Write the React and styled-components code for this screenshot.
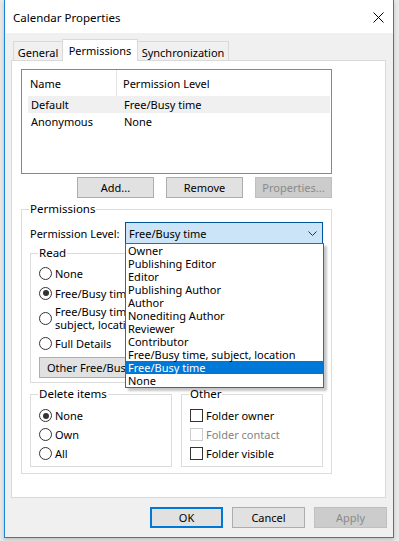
import React from "react"
import styled, { createGlobalStyle } from "styled-components"

const Global = createGlobalStyle`
  html, body { margin: 0; padding: 0; }
  body {
    background: #e9e9e9;
    font-family: "Noto Sans", "Segoe UI", sans-serif;
    font-size: 11px;
    color: #000;
  }
  * { box-sizing: border-box; }
`

const Desktop = styled.div`
  width: 399px;
  height: 541px;
  overflow: hidden;
  padding-left: 4px;
`

const Window = styled.div`
  width: 390px;
  height: 538px;
  background: #f0f0f0;
  border: 1px solid #1883d7;
  border-top: none;
  box-shadow: 0 2px 4px rgba(0,0,0,0.18);
  display: flex;
  flex-direction: column;
`

const TitleBar = styled.div`
  height: 33px;
  background: #fff;
  display: flex;
  align-items: center;
  justify-content: space-between;
  padding: 2px 9px 0 8px;
  flex-shrink: 0;
  font-size: 11.5px;
`

const Body = styled.div`
  padding: 6px 0 0 6px;
  display: flex;
  flex-direction: column;
`

const TabStrip = styled.div`
  display: flex;
  align-items: flex-end;
  height: 22px;
  margin-bottom: -1px;
  padding-left: 3px;
  position: relative;
  z-index: 1;
`

const Tab = styled.div`
  width: ${p => p.$w};
  height: ${p => (p.$active ? "22px" : "19px")};
  margin-bottom: ${p => (p.$active ? "0" : "1px")};
  margin-left: -1px;
  border: 1px solid #d9d9d9;
  border-bottom: none;
  background: ${p => (p.$active ? "#fff" : "#f0f0f0")};
  display: flex;
  align-items: center;
  justify-content: center;
  padding-top: ${p => (p.$active ? "0" : "2px")};
  white-space: nowrap;
`

const Panel = styled.div`
  width: 375px;
  height: 438px;
  background: #fff;
  border: 1px solid #d9d9d9;
  padding: 8px 0 0 9px;
`

const ListView = styled.div`
  width: 311px;
  height: 105px;
  border: 1px solid #828790;
  padding: 0 1px;
`

const HeaderRow = styled.div`
  display: flex;
  height: 26px;
`

const HeaderCell = styled.div`
  width: ${p => p.$w || "auto"};
  padding-left: ${p => p.$pl || "6px"};
  display: flex;
  align-items: center;
  border-right: ${p => (p.$sep ? "1px solid #e5e5e5" : "none")};
`

const Row = styled.div`
  display: flex;
  height: 17px;
  align-items: center;
  margin-left: 5px;
  background: ${p => (p.$selected ? "#f0f0f0" : "transparent")};
`

const Cell = styled.div`
  width: ${p => p.$w || "auto"};
  padding-left: ${p => p.$pl || "3px"};
`

const ButtonRow = styled.div`
  width: 311px;
  display: flex;
  justify-content: flex-end;
  gap: 12px;
  margin-top: 3px;
`

const Button = styled.button`
  width: ${p => p.$w || "77px"};
  height: 21px;
  padding: 0;
  font: inherit;
  color: #000;
  background: #e1e1e1;
  border: 1px solid #adadad;
  white-space: nowrap;
  overflow: hidden;
  text-align: ${p => (p.$left ? "left" : "center")};
  padding-left: ${p => (p.$left ? "7px" : "0")};
  margin-top: ${p => p.$mt || "0"};
  &:disabled {
    background: #cccccc;
    border-color: #bfbfbf;
    color: #8a8a8a;
  }
  &.default {
    border: 2px solid #0078d7;
  }
`

const Group = styled.fieldset`
  margin: ${p => p.$mt || "0"} 0 0 0;
  padding: ${p => p.$pt || "0"} 8px ${p => p.$pb || "0"} 8px;
  border: 1px solid #dcdcdc;
  width: ${p => p.$w || "auto"};
  min-width: 0;
`

const Legend = styled.legend`
  padding: 0 1px;
  margin-left: -1px;
  line-height: 16px;
  font-size: 11.5px;
`

const LevelRow = styled.div`
  display: flex;
  align-items: center;
  height: 22px;
`

const LevelLabel = styled.span`
  width: 95px;
  flex-shrink: 0;
  white-space: nowrap;
`

const ComboWrap = styled.div`
  position: relative;
  width: 199px;
  height: 22px;
`

const Combo = styled.div`
  height: 100%;
  background: #cce4f7;
  border: 1px solid #005499;
  display: flex;
  align-items: center;
  justify-content: space-between;
  padding: 0 5px 0 3px;
`

const DropList = styled.ul`
  position: absolute;
  top: 21px;
  left: 0;
  width: 199px;
  margin: 0;
  padding: 0;
  list-style: none;
  background: #fff;
  border: 1px solid #0078d7;
  box-shadow: 3px 3px 2px rgba(0,0,0,0.22);
  z-index: 10;
`

const DropItem = styled.li`
  height: 13px;
  line-height: 13px;
  padding-left: 2px;
  white-space: nowrap;
  background: ${p => (p.$selected ? "#0078d7" : "transparent")};
  color: ${p => (p.$selected ? "#fff" : "#000")};
`

const Columns = styled.div`
  display: flex;
  gap: 9px;
  margin-top: ${p => p.$mt || "0"};
`

const OptionRow = styled.label`
  display: flex;
  align-items: center;
  height: ${p => p.$h || "20px"};
  gap: 3px;
  white-space: nowrap;
  color: ${p => (p.$disabled ? "#838383" : "#000")};
`

const TwoLine = styled.span`
  line-height: 13px;
`

const Radio = styled.span`
  width: 13px;
  height: 13px;
  border-radius: 50%;
  border: 1px solid #333;
  background: #fff;
  flex-shrink: 0;
  display: flex;
  align-items: center;
  justify-content: center;
  &::after {
    content: "";
    width: 6px;
    height: 6px;
    border-radius: 50%;
    background: ${p => (p.$checked ? "#333" : "transparent")};
  }
`

const Check = styled.span`
  width: 13px;
  height: 13px;
  border: 1px solid ${p => (p.$disabled ? "#cccccc" : "#333")};
  background: #fff;
  flex-shrink: 0;
`

const Footer = styled.div`
  display: flex;
  justify-content: flex-end;
  gap: 9px;
  padding: 9px 6px 0 0;
`

const Chevron = () => (
  <svg width="9" height="5" viewBox="0 0 9 5">
    <path d="M0.5 0.5 L4.5 4.5 L8.5 0.5" fill="none" stroke="#333" strokeWidth="1" />
  </svg>
)

const CloseIcon = () => (
  <svg width="11" height="11" viewBox="0 0 11 11">
    <path d="M0.5 0.5 L10.5 10.5 M10.5 0.5 L0.5 10.5" stroke="#000" strokeWidth="1" />
  </svg>
)

const levels = [
  "Owner",
  "Publishing Editor",
  "Editor",
  "Publishing Author",
  "Author",
  "Nonediting Author",
  "Reviewer",
  "Contributor",
  "Free/Busy time, subject, location",
  "Free/Busy time",
  "None",
]

export default function App() {
  return (
    <Desktop>
      <Global />
      <Window>
        <TitleBar>
          <span>Calendar Properties</span>
          <CloseIcon />
        </TitleBar>
        <Body>
          <TabStrip>
            <Tab $w="50px">General</Tab>
            <Tab $w="76px" $active>Permissions</Tab>
            <Tab $w="92px">Synchronization</Tab>
          </TabStrip>
          <Panel>
            <ListView>
              <HeaderRow>
                <HeaderCell $w="94px" $pl="7px" $sep>Name</HeaderCell>
                <HeaderCell>Permission Level</HeaderCell>
              </HeaderRow>
              <Row $selected>
                <Cell $w="90px">Default</Cell>
                <Cell $pl="6px">Free/Busy time</Cell>
              </Row>
              <Row>
                <Cell $w="90px">Anonymous</Cell>
                <Cell $pl="6px">None</Cell>
              </Row>
            </ListView>

            <ButtonRow>
              <Button>Add...</Button>
              <Button>Remove</Button>
              <Button disabled>Properties...</Button>
            </ButtonRow>

            <Group $w="311px" $mt="3px" $pt="5px" $pb="6px">
              <Legend>Permissions</Legend>
              <LevelRow>
                <LevelLabel>Permission Level:</LevelLabel>
                <ComboWrap>
                  <Combo>
                    <span>Free/Busy time</span>
                    <Chevron />
                  </Combo>
                  <DropList>
                    {levels.map((l, i) => (
                      <DropItem key={l} $selected={i === 9}>{l}</DropItem>
                    ))}
                  </DropList>
                </ComboWrap>
              </LevelRow>

              <Columns $mt="1px">
                <Group $w="142px" $pt="2px" $pb="4px">
                  <Legend>Read</Legend>
                  <OptionRow><Radio />None</OptionRow>
                  <OptionRow><Radio $checked />Free/Busy time</OptionRow>
                  <OptionRow $h="30px">
                    <Radio />
                    <TwoLine>Free/Busy time,<br />subject, location</TwoLine>
                  </OptionRow>
                  <OptionRow><Radio />Full Details</OptionRow>
                  <Button $w="125px" $left $mt="4px">Other Free/Busy...</Button>
                </Group>
              </Columns>

              <Columns $mt="3px">
                <Group $w="142px" $pt="4px" $pb="3px">
                  <Legend>Delete items</Legend>
                  <OptionRow $h="19px"><Radio $checked />None</OptionRow>
                  <OptionRow $h="19px"><Radio />Own</OptionRow>
                  <OptionRow $h="19px"><Radio />All</OptionRow>
                </Group>
                <Group $w="142px" $pt="4px" $pb="3px">
                  <Legend>Other</Legend>
                  <OptionRow $h="19px"><Check />Folder owner</OptionRow>
                  <OptionRow $h="19px" $disabled><Check $disabled />Folder contact</OptionRow>
                  <OptionRow $h="19px"><Check />Folder visible</OptionRow>
                </Group>
              </Columns>
            </Group>
          </Panel>
          <Footer>
            <Button $w="73px" className="default">OK</Button>
            <Button $w="73px">Cancel</Button>
            <Button $w="73px" disabled>Apply</Button>
          </Footer>
        </Body>
      </Window>
    </Desktop>
  )
}
